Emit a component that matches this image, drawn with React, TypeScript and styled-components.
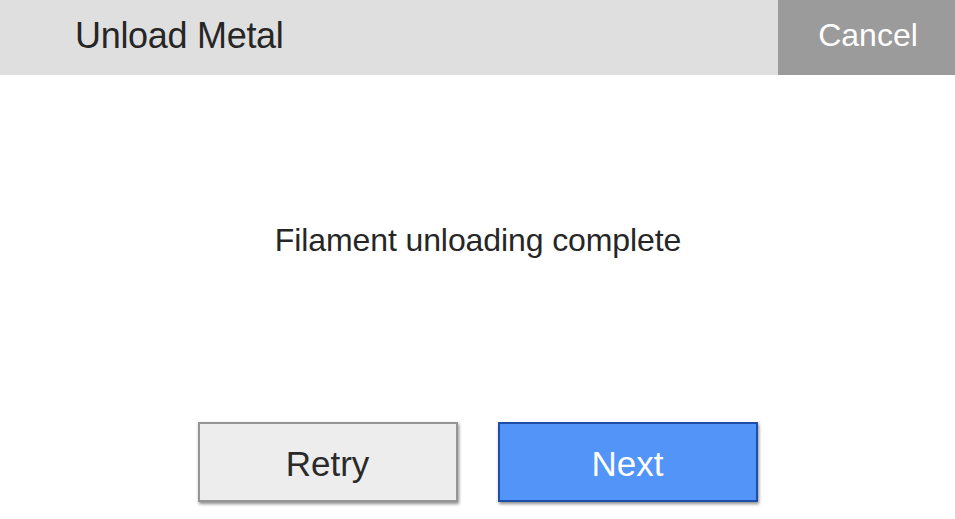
import React from 'react';
import styled, { createGlobalStyle } from 'styled-components';

const GlobalStyle = createGlobalStyle`
  html, body {
    margin: 0;
    padding: 0;
    background: #ffffff;
  }
  body {
    font-family: "Liberation Sans", Arial, sans-serif;
  }
`;

const Screen = styled.div`
  width: 955px;
  height: 519px;
  display: flex;
  flex-direction: column;
  overflow: hidden;
  background: #ffffff;
`;

const Header = styled.div`
  height: 75px;
  display: flex;
  align-items: stretch;
  background: #dfdfdf;
`;

const Title = styled.h1`
  flex: 1;
  margin: 0;
  padding: 0 0 4px 75px;
  display: flex;
  align-items: center;
  font-size: 36px;
  font-weight: normal;
  color: #262626;
  letter-spacing: -0.3px;
`;

const CancelButton = styled.button`
  width: 177px;
  border: none;
  background: #9b9b9b;
  color: #ffffff;
  font-family: inherit;
  font-size: 32px;
  padding: 0 0 4px 3px;
`;

const Body = styled.div`
  flex: 1;
  display: flex;
  flex-direction: column;
  align-items: center;
`;

const Message = styled.p`
  margin: 147px 0 0;
  padding-left: 1px;
  font-size: 32px;
  color: #262626;
  letter-spacing: -0.1px;
`;

const ButtonRow = styled.div`
  margin-top: auto;
  margin-bottom: 17px;
  display: flex;
  gap: 40px;
`;

const ActionButton = styled.button<{ $primary?: boolean }>`
  width: 260px;
  height: 80px;
  box-sizing: border-box;
  border: 2px solid ${p => (p.$primary ? '#1d4fa8' : '#959595')};
  background: ${p => (p.$primary ? '#5294f7' : '#ededed')};
  color: ${p => (p.$primary ? '#ffffff' : '#2a2a2a')};
  box-shadow: 1px 2px 3px rgba(0, 0, 0, 0.45);
  font-family: inherit;
  font-size: 35px;
  padding: 4px 0 0;
`;

export default function App() {
  return (
    <>
      <GlobalStyle />
      <Screen>
        <Header>
          <Title>Unload Metal</Title>
          <CancelButton>Cancel</CancelButton>
        </Header>
        <Body>
          <Message>Filament unloading complete</Message>
          <ButtonRow>
            <ActionButton>Retry</ActionButton>
            <ActionButton $primary>Next</ActionButton>
          </ButtonRow>
        </Body>
      </Screen>
    </>
  );
}
